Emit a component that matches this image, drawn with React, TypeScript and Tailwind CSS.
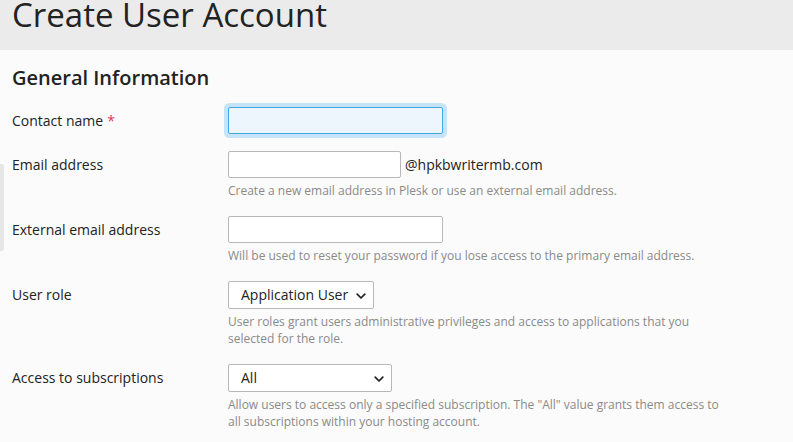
import React from 'react';

const Chevron = () => (
  <svg width="10" height="7" viewBox="0 0 10 7" className="pointer-events-none absolute right-[7px] top-[11px]">
    <path d="M1.2 1.2 L5 5 L8.8 1.2" fill="none" stroke="#222" strokeWidth="1.7" strokeLinecap="round" strokeLinejoin="round" />
  </svg>
);

interface RowProps {
  label: string;
  required?: boolean;
  help?: string;
  children: React.ReactNode;
}

const Row: React.FC<RowProps> = ({ label, required, help, children }) => (
  <div className="flex mb-[17px]">
    <div className="w-[216px] shrink-0 leading-[27px] text-[14px] text-[#222]">
      {label}
      {required && <span className="text-[#e0335c] ml-1">*</span>}
    </div>
    <div className="flex flex-col">
      {children}
      {help && (
        <div className="mt-[4px] text-[12px] leading-[17px] text-[#8a8a8a] max-w-[500px]">{help}</div>
      )}
    </div>
  </div>
);

export default function App() {
  return (
    <div
      className="w-[793px] h-[442px] overflow-hidden bg-[#fbfbfb] relative"
      style={{ fontFamily: '"Open Sans", "Liberation Sans", sans-serif' }}
    >
      <div className="h-[50px] bg-[#ebebeb] px-3 overflow-hidden">
        <h1 className="text-[33px] leading-[33px] mt-[-2px] text-[#222] font-normal">Create User Account</h1>
      </div>

      {/* scroll edge on the left */}
      <div className="absolute left-0 top-[164px] w-[4px] h-[87px] bg-[#e6e6e6] rounded-r-[2px]" />

      <div className="px-3 pt-[15px]">
        <h2 className="text-[20px] leading-[26px] font-semibold text-[#222] mb-[16px]">General Information</h2>

        <Row label="Contact name" required>
          <div className="w-[215px] h-[27px] bg-[#eef6fd] border border-[#45a6e6] rounded-[2px] ring-4 ring-[#c5e3f9]" />
        </Row>

        <Row label="Email address" help="Create a new email address in Plesk or use an external email address.">
          <div className="flex items-center">
            <div className="w-[173px] h-[27px] bg-white border border-[#b8b8b8] rounded-[2px]" />
            <span className="ml-[4px] text-[14px] text-[#222]">@hpkbwritermb.com</span>
          </div>
        </Row>

        <Row label="External email address" help="Will be used to reset your password if you lose access to the primary email address.">
          <div className="w-[215px] h-[27px] bg-white border border-[#b8b8b8] rounded-[2px]" />
        </Row>

        <Row
          label="User role"
          help="User roles grant users administrative privileges and access to applications that you selected for the role."
        >
          <div className="relative w-[146px] h-[28px] bg-white border border-[#b8b8b8] rounded-[2px] pl-[12px] text-[14px] leading-[26px] text-[#222]">
            Application User
            <Chevron />
          </div>
        </Row>

        <Row
          label="Access to subscriptions"
          help={'Allow users to access only a specified subscription. The "All" value grants them access to all subscriptions within your hosting account.'}
        >
          <div className="relative w-[164px] h-[28px] bg-white border border-[#b8b8b8] rounded-[2px] pl-[12px] text-[14px] leading-[26px] text-[#222]">
            All
            <Chevron />
          </div>
        </Row>
      </div>
    </div>
  );
}
